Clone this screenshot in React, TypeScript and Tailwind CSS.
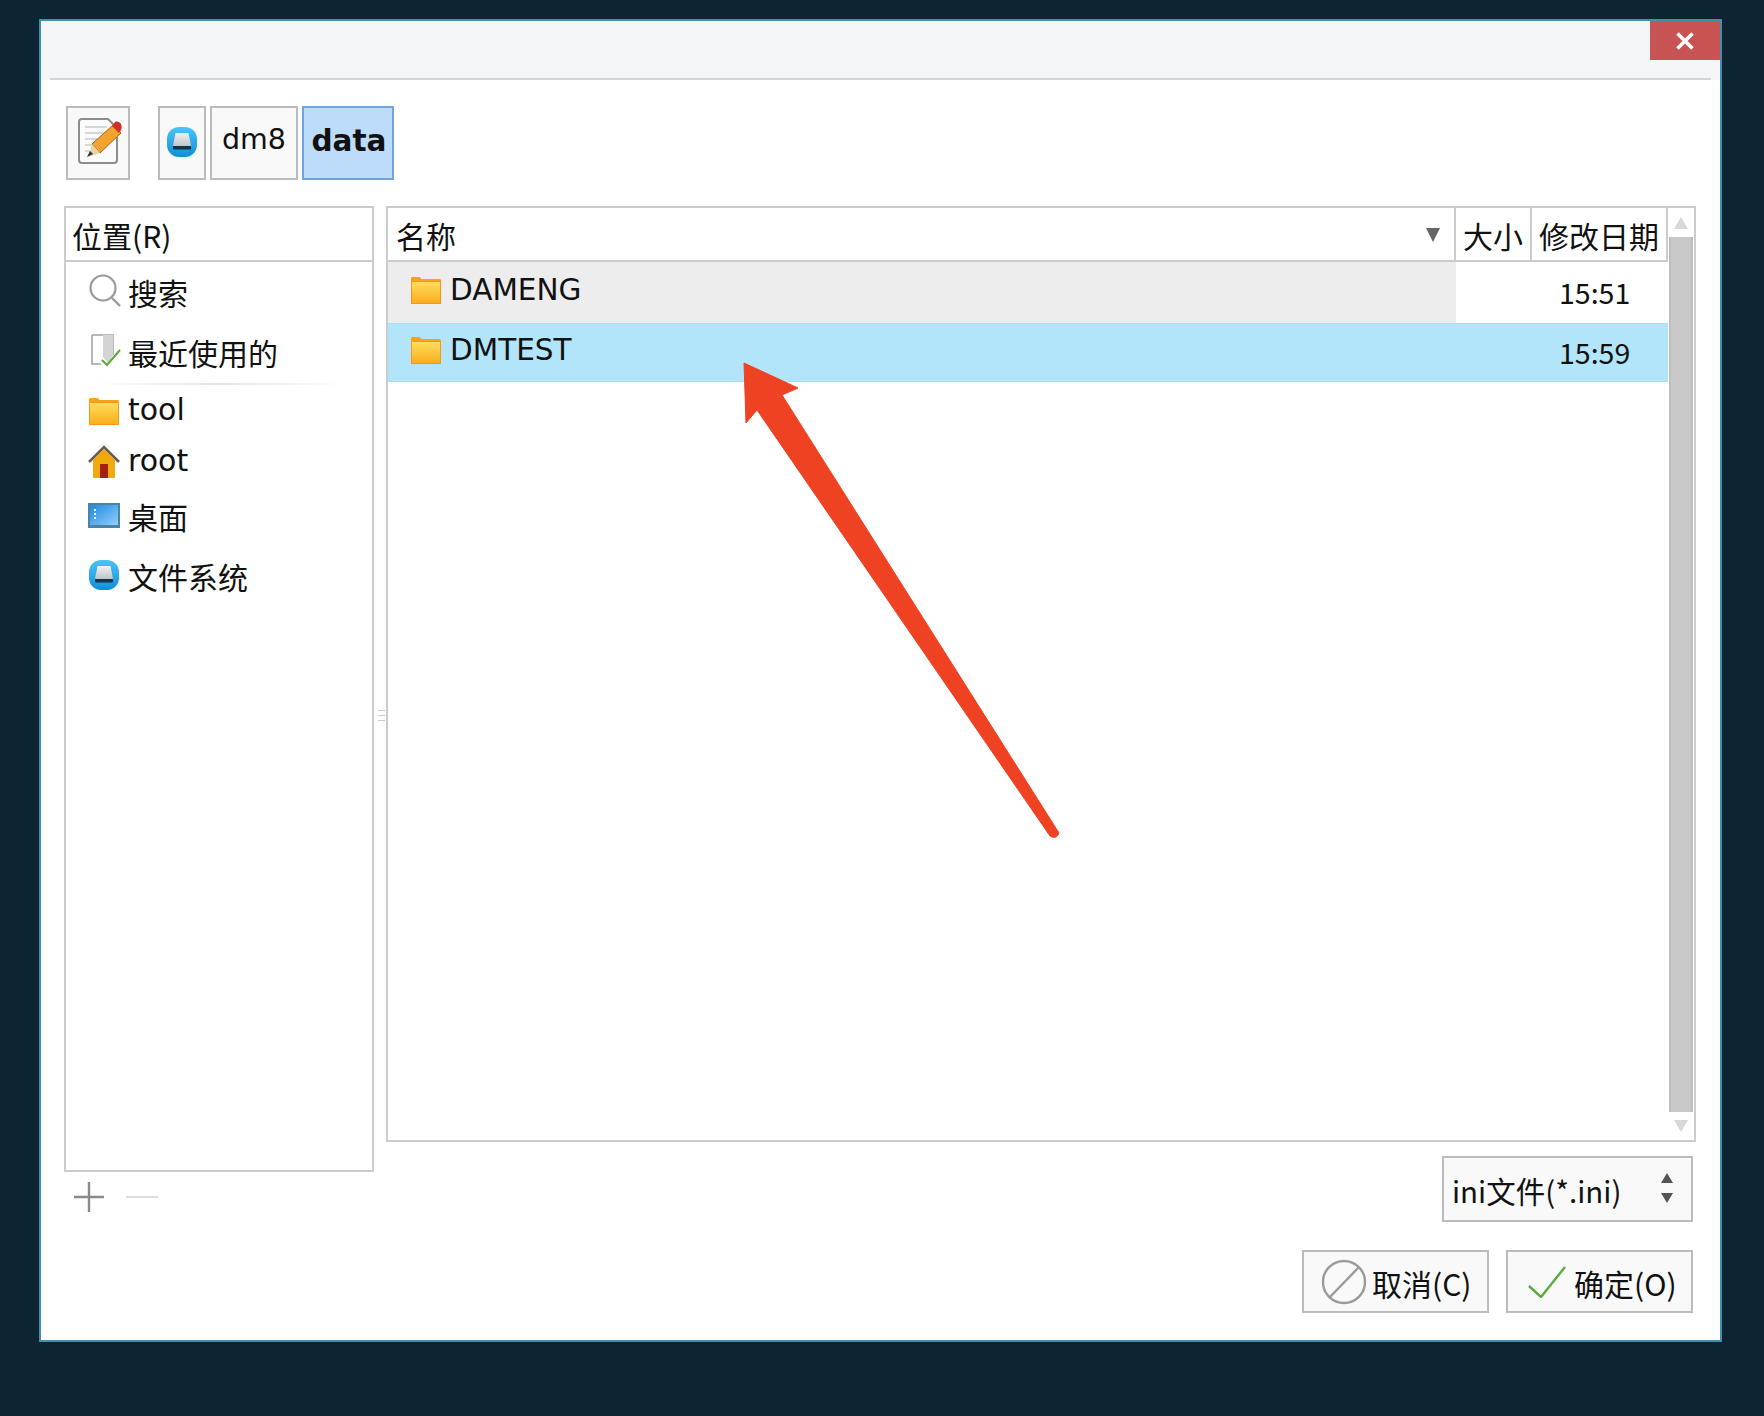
import type { ReactNode } from 'react';

const dejavu = "font-['DejaVu_Sans','Noto_Sans_CJK_SC',sans-serif]";
const cjk = "font-['Noto_Sans_CJK_SC',sans-serif]";

const FolderIcon = () => (
  <svg width="32" height="29" viewBox="0 0 32 29" className="shrink-0">
    <defs>
      <linearGradient id="folderFill" x1="0" y1="0" x2="0" y2="1">
        <stop offset="0" stopColor="#ffdf5e" />
        <stop offset="1" stopColor="#f9ac1c" />
      </linearGradient>
    </defs>
    <path d="M1 2.500C1 1.500 1.500 1 2.500 1h7l2 2h18c1 0 1.500.5 1.500 1.500V27c0 .6-.5 1-1 1H2c-.6 0-1-.4-1-1Z" fill="#f9a11b" />
    <path d="M1.500 5.500h29v22h-29Z" fill="url(#folderFill)" stroke="#f7961c" />
  </svg>
);

const DiskIcon = ({ size = 32 }: { size?: number }) => (
  <svg width={size} height={size} viewBox="0 0 32 32" className="shrink-0">
    <defs>
      <linearGradient id="diskBlue" x1="0" y1="0" x2="0" y2="1">
        <stop offset="0" stopColor="#4cc4f7" />
        <stop offset="1" stopColor="#0f8fd8" />
      </linearGradient>
      <linearGradient id="diskTop" x1="0" y1="0" x2="0" y2="1">
        <stop offset="0" stopColor="#f2f2f2" />
        <stop offset="1" stopColor="#bfc4c8" />
      </linearGradient>
    </defs>
    <rect x="1" y="1" width="30" height="30" rx="12" fill="url(#diskBlue)" />
    <path d="M9.500 7h13l2.500 13H7Z" fill="url(#diskTop)" />
    <rect x="7" y="20" width="18" height="3.500" fill="#12344b" />
  </svg>
);

const SearchIcon = () => (
  <svg width="34" height="34" viewBox="0 0 34 34" fill="none" stroke="#9a9a9a" className="shrink-0">
    <circle cx="15" cy="14" r="12.500" strokeWidth="2.200" />
    <path d="M24 24l8 8" strokeWidth="2.400" />
  </svg>
);

const RecentIcon = () => (
  <svg width="30" height="34" viewBox="0 0 30 34" fill="none" className="shrink-0">
    <path d="M1 1h21v20M1 1v29h9" stroke="#a3a3a3" strokeWidth="1.600" />
    <path d="M12 1v22l5 6 5-8V1Z" fill="#d4d4d4" />
    <path d="M11 26l5 5 13-15" stroke="#5cab3d" strokeWidth="2.200" />
  </svg>
);

const HomeIcon = () => (
  <svg width="32" height="33" viewBox="0 0 32 33" className="shrink-0">
    <path d="M5 15L16 4l11 11v18H5Z" fill="#f1a90e" />
    <path d="M1 17L16 2l15 15" fill="none" stroke="#6f5a47" strokeWidth="2.500" />
    <rect x="12" y="19" width="8" height="14" fill="#a3200f" />
  </svg>
);

const DesktopIcon = () => (
  <svg width="32" height="25" viewBox="0 0 32 25" className="shrink-0">
    <defs>
      <linearGradient id="deskFill" x1="0" y1="0" x2="1" y2="1">
        <stop offset="0" stopColor="#1f89de" />
        <stop offset="1" stopColor="#8fd0fb" />
      </linearGradient>
    </defs>
    <rect x="0" y="0" width="32" height="25" fill="#4b82a6" />
    <rect x="2" y="2" width="28" height="20" fill="url(#deskFill)" />
    <path d="M6 6h2v2H6ZM6 10h2v2H6ZM6 14h2v2H6Z" fill="#e6f5ff" />
  </svg>
);

const EditIcon = () => (
  <svg width="46" height="47" viewBox="0 0 46 47" className="shrink-0 mb-[3px] ml-[3px]">
    <path d="M5 1h26l9 9v32c0 2-1 3-3 3H5c-2 0-3-1-3-3V4c0-2 1-3 3-3Z" fill="#fbfbfb" stroke="#8d8d8d" strokeWidth="2" />
    <path d="M8 9h22M8 15h22M8 21h18M8 27h12M8 33h8" stroke="#cccccc" strokeWidth="1.500" />
    <path d="M15 26L36 7l8 8-21 20Z" fill="#f2a32e" stroke="#a9651a" strokeWidth="1" />
    <path d="M35 8l3-4c2-1 5 0 6 2s1 5-1 8l-1 1Z" fill="#d22f2a" />
    <path d="M15 26l8 9-12 4Z" fill="#e8d2a8" />
    <path d="M13 33l3 3-6 3Z" fill="#333333" />
  </svg>
);

const CancelIcon = () => (
  <svg width="46" height="46" viewBox="0 0 46 46" fill="none" stroke="#9a9a9a" strokeWidth="2.400" className="shrink-0">
    <circle cx="23" cy="23" r="21" />
    <path d="M9 38L38 8" />
  </svg>
);

const CheckIcon = () => (
  <svg width="38" height="32" viewBox="0 0 38 32" fill="none" stroke="#5cab3d" strokeWidth="2.400" className="shrink-0">
    <path d="M1 20l12 11L37 1" />
  </svg>
);

const PlaceRow = ({ icon, label, className }: { icon: ReactNode; label: string; className: string }) => (
  <div className={`flex items-center ${className}`}>
    <div className="w-[62px] pl-[22px] flex items-center justify-start shrink-0">{icon}</div>
    <span className="mb-[2px]">{label}</span>
  </div>
);

const ToolButton = ({ children, className }: { children: ReactNode; className: string }) => (
  <div className={`h-[74px] flex items-center justify-center border-2 border-[#bcbcbc] bg-[#f9f9f9] ${className}`}>
    {children}
  </div>
);

const App = () => {
  return (
    <div className="w-[1764px] h-[1416px] bg-[#0d2532] pt-[19px] pl-[39px] overflow-hidden">
      <div className="relative w-[1683px] h-[1323px] border-2 border-[#4191ae] bg-white flex flex-col text-[#111] text-[30px] leading-none">
        {/* title bar */}
        <div className="h-[59px] bg-[#f4f5f7] flex flex-col shrink-0">
          <div className="h-[57px] flex justify-end items-start">
            <div className="w-[70px] h-[39px] bg-[#c85353] flex items-center justify-center">
              <svg width="18" height="18" viewBox="0 0 18 18" stroke="white" strokeWidth="3.600">
                <path d="M1.500 1.500l15 15M16.500 1.500l-15 15" />
              </svg>
            </div>
          </div>
          <div className="h-[2px] mx-[9px] bg-[#d4d4d4]" />
        </div>

        {/* path bar */}
        <div className={`flex mt-[26px] ml-[25px] ${dejavu}`}>
          <ToolButton className="w-[64px] mr-[28px]"><EditIcon /></ToolButton>
          <ToolButton className="w-[48px] mr-[4px]">
            <div className="mb-[3px]"><DiskIcon /></div>
          </ToolButton>
          <ToolButton className="w-[88px] mr-[4px] pb-[6px] text-[28.5px]">dm8</ToolButton>
          <div className="w-[92px] h-[74px] flex items-center justify-center border-2 border-[#6fa5dc] bg-[#bcdcf9] font-bold pb-[3px] pl-[2px] text-[29.5px]">data</div>
        </div>

        <div className="flex mt-[26px] ml-[23px]">
          {/* places */}
          <div className="w-[310px] mr-[12px] shrink-0">
            <div className={`h-[966px] border-2 border-[#cccccc] ${cjk}`}>
              <div className="h-[54px] border-b-2 border-[#cccccc] pl-[6px] flex items-center pt-[2px]">位置(R)</div>
              <PlaceRow className="h-[61px]" icon={<div className="mb-[4px]"><SearchIcon /></div>} label="搜索" />
              <PlaceRow className="h-[60px]" icon={<div className="mb-[4px] ml-[3px]"><RecentIcon /></div>} label="最近使用的" />
              <div className="h-[2px] mx-[24px] bg-gradient-to-r from-white via-[#e4e4e4] to-white" />
              <PlaceRow className={`h-[52px] ${dejavu}`} icon={<FolderIcon />} label="tool" />
              <PlaceRow className={`h-[50px] ${dejavu}`} icon={<div className="mb-[2px]"><HomeIcon /></div>} label="root" />
              <PlaceRow className="h-[60px]" icon={<div className="mb-[4px]"><DesktopIcon /></div>} label="桌面" />
              <PlaceRow className="h-[60px]" icon={<div className="mb-[4px]"><DiskIcon /></div>} label="文件系统" />
            </div>
            <div className="flex items-center h-[30px] mt-[10px] pl-[10px]">
              <svg width="30" height="30" viewBox="0 0 30 30" stroke="#8a8a8a" strokeWidth="2.400">
                <path d="M0 15h30M15 0v30" />
              </svg>
              <div className="w-[32px] h-[2px] bg-[#dddddd] ml-[22px]" />
            </div>
          </div>

          {/* splitter */}
          <div className="absolute left-[337px] top-[689px] w-[7px] h-[11px] flex flex-col justify-between">
            <div className="h-[1px] bg-[#cccccc]" />
            <div className="h-[1px] bg-[#cccccc]" />
            <div className="h-[1px] bg-[#cccccc]" />
          </div>

          {/* files */}
          <div className="w-[1310px] shrink-0">
            <div className={`h-[936px] border-2 border-[#cccccc] flex ${cjk}`}>
              <div className="flex-1 flex flex-col">
                <div className="h-[54px] flex border-b-2 border-[#cccccc] shrink-0">
                  <div className="w-[1068px] flex items-center justify-between pl-[8px] pr-[13px] border-r-2 border-[#cccccc] pt-[2px]">
                    <span>名称</span>
                    <svg width="16" height="16" viewBox="0 0 16 16" className="mb-[1px]">
                      <path d="M1 1h14L8 15Z" fill="#666666" />
                    </svg>
                  </div>
                  <div className="w-[76px] flex items-center justify-center border-r-2 border-[#cccccc] pt-[2px]">大小</div>
                  <div className="flex-1 flex items-center justify-center border-r-2 border-[#cccccc] pt-[2px]">修改日期</div>
                </div>
                <div className="h-[61px] flex shrink-0">
                  <div className={`w-[1068px] bg-[#ededed] flex items-center pl-[22px] pb-[4px] text-[29.5px] ${dejavu}`}>
                    <FolderIcon />
                    <span className="ml-[8px]">DAMENG</span>
                  </div>
                  <div className="flex-1 flex items-center pl-[103px] text-[28.5px]">15:51</div>
                </div>
                <div className="h-[59px] bg-[#b3e5fa] border-y border-[#a8dff8] flex items-center pl-[22px] shrink-0">
                  <div className={`flex items-center flex-1 pb-[4px] text-[29.5px] ${dejavu}`}>
                    <FolderIcon />
                    <span className="ml-[8px]">DMTEST</span>
                  </div>
                  <div className="w-[109px] text-[28.5px]">15:59</div>
                </div>
              </div>
              <div className="w-[26px] flex flex-col shrink-0">
                <div className="h-[29px] w-full flex items-center justify-center shrink-0">
                  <svg width="14" height="12" viewBox="0 0 14 12"><path d="M7 0l7 12H0Z" fill="#d8d8d8" /></svg>
                </div>
                <div className="w-[24px] ml-[1px] h-[875px] bg-[#c8c8c8] border-x-2 border-[#bdbdbd] shrink-0" />
                <div className="flex-1 flex items-center justify-center">
                  <svg width="14" height="12" viewBox="0 0 14 12"><path d="M0 0h14L7 12Z" fill="#d8d8d8" /></svg>
                </div>
              </div>
            </div>

            <div className="flex flex-col items-end pr-[3px]">
              <div className={`w-[251px] h-[66px] mt-[14px] border-2 border-[#bcbcbc] bg-[#f9f9f9] flex items-center justify-between pl-[8px] pr-[17px] ${cjk}`}>
                <span className="pt-[4px] text-[29.5px]">ini文件(*.ini)</span>
                <svg width="14" height="32" viewBox="0 0 14 32" fill="#555555">
                  <path d="M7 0l6 10H1ZM1 20h12l-6 10Z" />
                </svg>
              </div>
              <div className={`flex mt-[28px] gap-[17px] ${cjk}`}>
                <div className="w-[187px] h-[63px] border-2 border-[#bcbcbc] bg-[#f9f9f9] flex items-center pl-[17px]">
                  <CancelIcon />
                  <span className="ml-[5px] pt-[2px]">取消(C)</span>
                </div>
                <div className="w-[187px] h-[63px] border-2 border-[#bcbcbc] bg-[#f9f9f9] flex items-center pl-[20px]">
                  <CheckIcon />
                  <span className="ml-[8px] pt-[2px]">确定(O)</span>
                </div>
              </div>
            </div>
          </div>
        </div>

        {/* red annotation arrow over the dialog */}
        <svg className="absolute left-[-2px] top-[-2px] pointer-events-none" width="1682" height="1322" viewBox="39 19 1682 1322">
          <path d="M744 363L798 388L782 395L1059 833Q1056 840 1050 836L757 410L746 423Z" fill="#ee4223" stroke="#ee4223" strokeWidth="1" strokeLinejoin="round" />
        </svg>
      </div>
    </div>
  );
};

export default App;
